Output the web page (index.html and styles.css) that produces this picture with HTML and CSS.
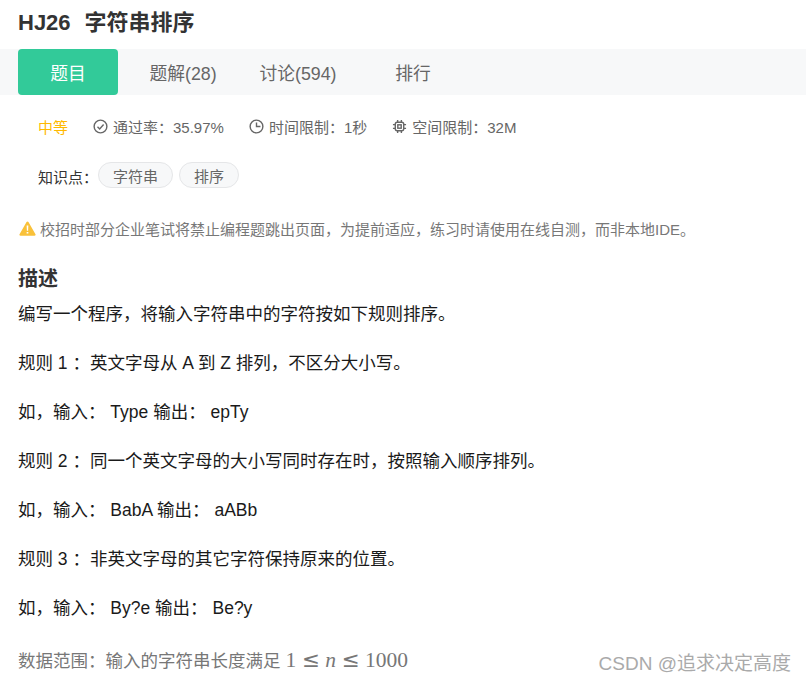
FILE: index.html
```html
<!DOCTYPE html>
<html lang="zh-CN">
<head>
<meta charset="utf-8">
<title>HJ26 字符串排序</title>
<link rel="stylesheet" href="styles.css">
</head>
<body>
<div class="page">
  <h1 class="title">HJ26<span class="title-gap"></span>字符串排序</h1>
  <nav class="tabs">
    <a class="tab active">题目</a>
    <a class="tab">题解(28)</a>
    <a class="tab">讨论(594)</a>
    <a class="tab">排行</a>
  </nav>
  <div class="meta">
    <span class="level">中等</span>
    <span class="item">
      <svg class="ico" viewBox="0 0 16 16"><circle cx="8" cy="8" r="6.800"/><path d="M4.800 8.300l2.300 2.300L11.300 5.800"/></svg>通过率：35.97%
    </span>
    <span class="item">
      <svg class="ico" viewBox="0 0 16 16"><circle cx="8" cy="8" r="6.800"/><path d="M8 3.800V8h4.200"/></svg>时间限制：1秒
    </span>
    <span class="item">
      <svg class="ico" viewBox="0 0 16 16"><rect x="3.500" y="3.500" width="9" height="9" rx="2"/><rect x="6.200" y="6.200" width="3.600" height="3.600"/><path d="M6 1v2.500M10 1v2.500M6 12.500V15M10 12.500V15M1 6h2.500M1 10h2.500M12.500 6H15M12.500 10H15"/></svg>空间限制：32M
    </span>
  </div>
  <div class="topics">
    <span class="topics-label">知识点：</span>
    <span class="chip">字符串</span>
    <span class="chip">排序</span>
  </div>
  <div class="warn">
    <svg class="warn-ico" viewBox="0 0 16 16"><path class="warn-bg" d="M8 1.300c.4 0 .7.2.9.5l6.600 11.600c.4.7-.1 1.400-.9 1.400H1.400c-.8 0-1.300-.7-.9-1.400L7.100 1.800c.2-.3.5-.5.900-.5z"/><path class="warn-mark" d="M7.200 5.200h1.600l-.2 5H7.400zM7.200 11.200h1.600v1.500H7.200z"/></svg>校招时部分企业笔试将禁止编程题跳出页面，为提前适应，练习时请使用在线自测，而非本地IDE。
  </div>
  <h2 class="desc-title">描述</h2>
  <div class="desc">
    <p>编写一个程序，将输入字符串中的字符按如下规则排序。</p>
    <p>规则 1 ：英文字母从 A 到 Z 排列，不区分大小写。</p>
    <p>如，输入： Type 输出： epTy</p>
    <p>规则 2 ：同一个英文字母的大小写同时存在时，按照输入顺序排列。</p>
    <p>如，输入： BabA 输出： aABb</p>
    <p>规则 3 ：非英文字母的其它字符保持原来的位置。</p>
    <p>如，输入： By?e 输出： Be?y</p>
    <p class="range">数据范围：输入的字符串长度满足 <span class="math">1<span class="rel">≤</span><i>n</i><span class="rel">≤</span>1000</span></p>
  </div>
  <div class="watermark">CSDN @追求决定高度</div>
</div>
</body>
</html>
```

FILE: styles.css
```css
* { box-sizing: border-box; }
html, body { margin: 0; padding: 0; background: #fff; }
body {
  font-family: "Liberation Sans", "Noto Sans CJK SC", sans-serif;
  color: #333;
  overflow: hidden;
}
.page { position: relative; width: 806px; height: 682px; overflow: hidden; }
.title {
  margin: 0;
  padding: 8px 18px 0;
  height: 49px;
  font-size: 22px;
  line-height: 30px;
  font-weight: 700;
  color: #333;
}
.title-gap { display: inline-block; width: 14px; }
.tabs {
  display: flex;
  gap: 15px;
  height: 46px;
  padding-left: 18px;
  background: #f7f8f9;
  font-size: 17.8px;
  color: #666;
}
.tab { display: flex; align-items: center; justify-content: center; width: 100px; white-space: nowrap; }
.tab.active { background: #32ca99; color: #fff; border-radius: 4px; }
.meta {
  display: flex;
  align-items: center;
  height: 20px;
  margin-top: 21px;
  padding-left: 38px;
  font-size: 15px;
  color: #666;
}
.level { color: #ffb900; margin-right: 25px; }
.item { display: flex; align-items: center; margin-right: 25px; }
.ico { width: 15px; height: 15px; margin-right: 5px; fill: none; stroke: #666; stroke-width: 1.500; }
.topics {
  display: flex;
  align-items: center;
  margin-top: 26px;
  padding-left: 38px;
  font-size: 15px;
  color: #333;
}
.topics-label { padding-top: 2px; }
.chip {
  display: flex; align-items: center; justify-content: center;
  height: 26px;
  padding: 0 14px;
  margin-right: 6px;
  background: #f7f8f9;
  border: 1px solid #e5e6e8;
  border-radius: 13px;
  color: #666;
  font-size: 15px;
}
.warn {
  display: flex;
  align-items: center;
  margin-top: 30px;
  padding-left: 19px;
  height: 20px;
  font-size: 15px;
  color: #777;
  white-space: nowrap;
}
.warn-ico { width: 17px; height: 17px; margin-right: 4px; flex: none; }
.warn-bg { fill: #f9c13a; }
.warn-mark { fill: #fff; }
.desc-title {
  margin: 28px 0 0;
  padding-left: 18px;
  font-size: 20px;
  line-height: 26px;
  font-weight: 700;
  color: #333;
}
.desc { margin-top: 10px; padding-left: 18px; font-size: 17.5px; color: #1a1a1a; }
.desc p { margin: 0 0 24.500px; line-height: 24.500px; }
.desc .range { color: #777; margin-top: 27px; white-space: nowrap; }
.math { font-family: "Liberation Serif", "DejaVu Serif", serif; font-size: 21.500px; }
.math .rel { font-family: "DejaVu Sans", sans-serif; margin: 0 5.500px; }
.watermark {
  position: absolute;
  right: 15px;
  bottom: 7px;
  font-size: 19px;
  color: #aaa;
}
```
